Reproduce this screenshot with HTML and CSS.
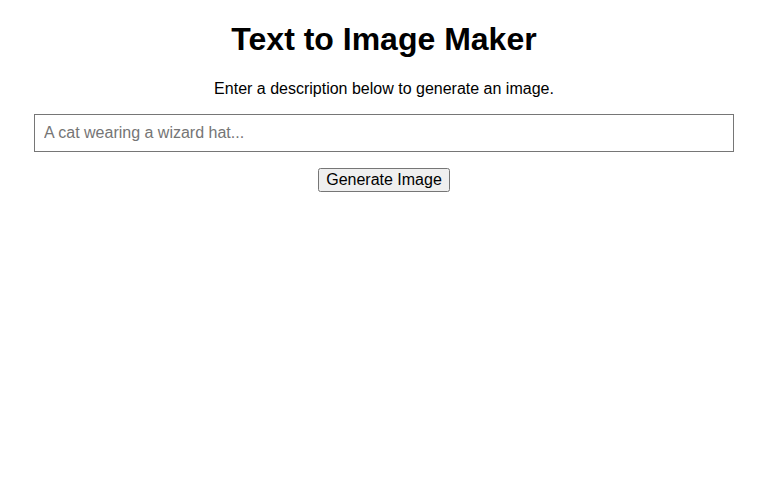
FILE: index.html
```html
<!DOCTYPE html>
<html lang="en">

<head>
  <meta charset="UTF-8">
  <meta name="viewport" content="width=device-width, initial-scale=1.0">
  <title>Text to Image Maker</title>
  <link rel="stylesheet" href="styles.css">
</head>

<body>
  <div class="container">
    <h1>Text to Image Maker</h1>
    <p>Enter a description below to generate an image.</p>
    <input type="text" id="prompt" placeholder="A cat wearing a wizard hat...">
    <button id="generate">Generate Image</button>
    <div class="result"></div>
  </div>
</body>

</html>
```

FILE: styles.css
```css
body {
  font-family: "Liberation Sans", Arial, sans-serif;
  text-align: center;
}

.container {
  display: flex;
  flex-direction: column;
  align-items: center;
}

h1 {
  font-size: 32px;
  margin: 13.44px 0 21.44px;
}

p {
  font-size: 16px;
  margin: 0 0 16px;
}

#prompt {
  width: 700px;
  box-sizing: border-box;
  padding: 9px 9px;
  font-size: 16px;
  font-family: "Liberation Sans", Arial, sans-serif;
  border: 1px solid #767676;
  margin-bottom: 16px;
}

#generate {
  font-size: 16px;
  font-family: "Liberation Sans", Arial, sans-serif;
}
```
